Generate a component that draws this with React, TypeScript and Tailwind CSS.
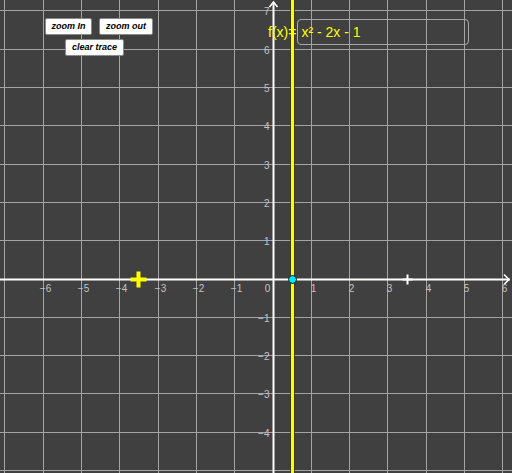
import React from "react";

const W = 512;
const H = 473;
const OX = 272.5;
const OY = 278.5;
const U = 38.3;

const px = (k: number) => Math.round(OX + k * U) + 0.5;
const py = (k: number) => Math.round(OY - k * U) + 0.5;

function Graph() {
  const xs = [-7, -6, -5, -4, -3, -2, -1, 1, 2, 3, 4, 5, 6];
  const ys = [-5, -4, -3, -2, -1, 1, 2, 3, 4, 5, 6, 7];
  const ax = px(0);
  const ay = py(0);
  const lineX = px(0.5);

  return (
    <svg width={W} height={H} className="block" style={{ fontFamily: "'Liberation Sans', Arial, sans-serif" }}>
      <rect width={W} height={H} fill="#404040" />
      {xs.map((k) => (
        <line key={"gx" + k} x1={px(k)} y1={0} x2={px(k)} y2={H} stroke="#a4a4a4" strokeWidth={1} />
      ))}
      {ys.map((k) => (
        <line key={"gy" + k} x1={0} y1={py(k)} x2={W} y2={py(k)} stroke="#a4a4a4" strokeWidth={1} />
      ))}

      {/* axes */}
      <line x1={0} y1={ay} x2={W - 2} y2={ay} stroke="#ffffff" strokeWidth={2} />
      <line x1={ax} y1={H} x2={ax} y2={2} stroke="#ffffff" strokeWidth={2} />
      <polyline points={`${W - 8},${ay - 5} ${W - 3},${ay} ${W - 8},${ay + 5}`} fill="none" stroke="#ffffff" strokeWidth={1.5} />
      <polyline points={`${ax - 4},${7} ${ax},${2} ${ax + 4},${7}`} fill="none" stroke="#ffffff" strokeWidth={1.5} />

      {/* x labels */}
      {xs
        .filter((k) => k >= -6)
        .map((k) => (
          <text key={"lx" + k} x={px(k) + 2} y={ay + 12} fill="#c4c4c4" fontSize={10} textAnchor="middle">
            {k < 0 ? "\u2212" + -k : k}
          </text>
        ))}
      <text x={ax - 6} y={ay + 12} fill="#c4c4c4" fontSize={10} textAnchor="middle">
        0
      </text>

      {/* y labels */}
      {ys
        .filter((k) => k >= -4)
        .map((k) => (
          <text key={"ly" + k} x={ax - 4} y={py(k) + 4} fill="#c4c4c4" fontSize={10} textAnchor="end">
            {k < 0 ? "\u2212" + -k : k}
          </text>
        ))}

      {/* vertical yellow line x = 0.5 */}
      <line x1={lineX} y1={0} x2={lineX} y2={H} stroke="#3a3a10" strokeWidth={4.5} />
      <line x1={lineX} y1={0} x2={lineX} y2={H} stroke="#ffff00" strokeWidth={3} />

      {/* point */}
      <circle cx={lineX} cy={ay} r={4} fill="#00e5ff" stroke="#1a1a1a" strokeWidth={1} />

      {/* yellow cross at -3.5 */}
      <g stroke="#ffff00" strokeWidth={4}>
        <line x1={px(-3.5) - 8} y1={ay} x2={px(-3.5) + 8} y2={ay} />
        <line x1={px(-3.5)} y1={ay - 8} x2={px(-3.5)} y2={ay + 8} />
      </g>

      {/* white cross at 3.5 */}
      <g stroke="#ffffff" strokeWidth={2}>
        <line x1={px(3.5) - 5} y1={ay} x2={px(3.5) + 5} y2={ay} />
        <line x1={px(3.5)} y1={ay - 5} x2={px(3.5)} y2={ay + 5} />
      </g>
    </svg>
  );
}

function Btn({ label, className }: { label: string; className: string }) {
  return (
    <button
      className={`absolute h-[17px] rounded-[2px] border border-[#8a8a8a] bg-white text-[9px] font-bold italic leading-none text-black ${className}`}
      style={{ fontFamily: "'Liberation Sans', Arial, sans-serif" }}
    >
      {label}
    </button>
  );
}

export default function App() {
  return (
    <div className="relative h-[473px] w-[512px] overflow-hidden bg-[#404040]">
      <Graph />
      <Btn label="zoom In" className="left-[45px] top-[18px] w-[47px]" />
      <Btn label="zoom out" className="left-[99px] top-[18px] w-[54px]" />
      <Btn label="clear trace" className="left-[65px] top-[39px] w-[59px]" />

      <div
        className="absolute left-[268px] top-[19px] flex items-center text-[14px] text-[#ffff00]"
        style={{ fontFamily: "'Liberation Sans', Arial, sans-serif" }}
      >
        <span className="leading-[25px]">f(x)=</span>
        <div className="ml-[1px] flex h-[26px] w-[172px] items-center rounded-[4px] border border-[#a8a8a8] pl-[3px]">
          x² - 2x - 1
        </div>
      </div>
    </div>
  );
}
